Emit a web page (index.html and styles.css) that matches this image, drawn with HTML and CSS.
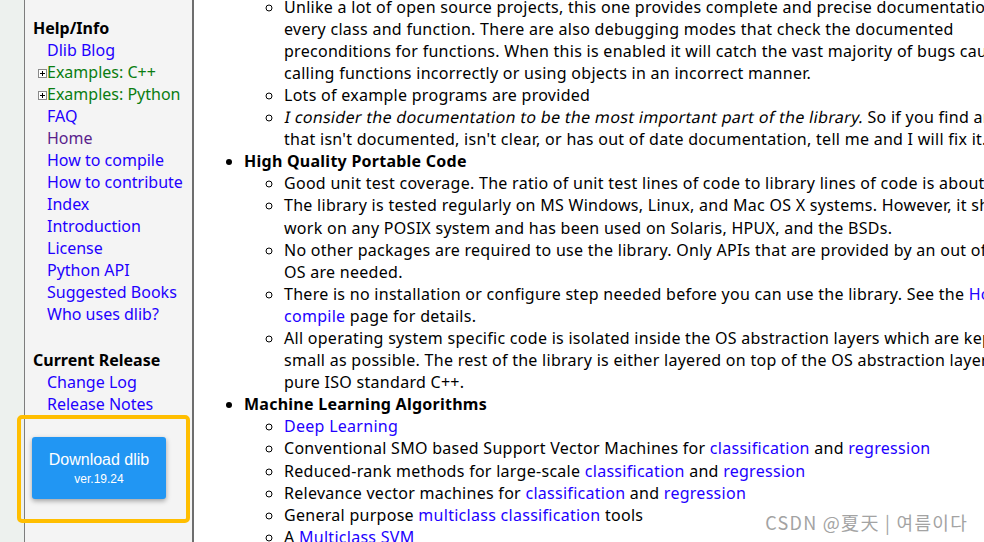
FILE: index.html
```html
<!DOCTYPE html>
<html lang="en">
<head>
<meta charset="utf-8">
<title>dlib C++ Library</title>
<link rel="stylesheet" href="styles.css">
</head>
<body>
<div class="page">
  <div class="gutter"></div>
  <nav class="sidebar">
    <section class="menu">
      <h3 class="menu-title">Help/Info</h3>
      <ul class="links">
        <li><a href="#">Dlib Blog</a></li>
        <li><span class="plus"><svg width="9" height="9" viewBox="0 0 9 9"><rect x="0.5" y="0.5" width="8" height="8" fill="#fff" stroke="#8a8a8a"/><path d="M2 4.5H7M4.5 2V7" stroke="#000" stroke-width="1"/></svg></span><a href="#" class="tree">Examples: C++</a></li>
        <li><span class="plus"><svg width="9" height="9" viewBox="0 0 9 9"><rect x="0.5" y="0.5" width="8" height="8" fill="#fff" stroke="#8a8a8a"/><path d="M2 4.5H7M4.5 2V7" stroke="#000" stroke-width="1"/></svg></span><a href="#" class="tree">Examples: Python</a></li>
        <li><a href="#">FAQ</a></li>
        <li><a href="#" class="visited">Home</a></li>
        <li><a href="#">How to compile</a></li>
        <li><a href="#">How to contribute</a></li>
        <li><a href="#">Index</a></li>
        <li><a href="#">Introduction</a></li>
        <li><a href="#">License</a></li>
        <li><a href="#">Python API</a></li>
        <li><a href="#">Suggested Books</a></li>
        <li><a href="#">Who uses dlib?</a></li>
      </ul>
    </section>
    <section class="menu release">
      <h3 class="menu-title">Current Release</h3>
      <ul class="links">
        <li><a href="#">Change Log</a></li>
        <li><a href="#">Release Notes</a></li>
      </ul>
    </section>
    <div class="download-wrap">
      <a href="#" class="download">Download dlib<span class="ver">ver.19.24</span></a>
      <div class="highlight"></div>
    </div>
  </nav>
  <main class="content">
    <ul class="features">
      <li><b>Documentation</b>
        <ul>
          <li>Unlike a lot of open source projects, this one provides complete and precise documentation for<br>every class and function. There are also debugging modes that check the documented<br>preconditions for functions. When this is enabled it will catch the vast majority of bugs caused by<br>calling functions incorrectly or using objects in an incorrect manner.</li>
          <li>Lots of example programs are provided</li>
          <li><i class="slant">I consider the documentation to be the most important part of the library.</i> So if you find anything<br>that isn't documented, isn't clear, or has out of date documentation, tell me and I will fix it.</li>
        </ul>
      </li>
      <li><b>High Quality Portable Code</b>
        <ul>
          <li>Good unit test coverage. The ratio of unit test lines of code to library lines of code is about 1 to 4.</li>
          <li>The library is tested regularly on MS Windows, Linux, and Mac OS X systems. However, it should<br>work on any POSIX system and has been used on Solaris, HPUX, and the BSDs.</li>
          <li>No other packages are required to use the library. Only APIs that are provided by an out of the box<br>OS are needed.</li>
          <li>There is no installation or configure step needed before you can use the library. See the <a href="#">How to<br>compile</a> page for details.</li>
          <li>All operating system specific code is isolated inside the OS abstraction layers which are kept as<br>small as possible. The rest of the library is either layered on top of the OS abstraction layers or is<br>pure ISO standard C++.</li>
        </ul>
      </li>
      <li><b>Machine Learning Algorithms</b>
        <ul>
          <li><a href="#">Deep Learning</a></li>
          <li>Conventional SMO based Support Vector Machines for <a href="#">classification</a> and <a href="#">regression</a></li>
          <li>Reduced-rank methods for large-scale <a href="#">classification</a> and <a href="#">regression</a></li>
          <li>Relevance vector machines for <a href="#">classification</a> and <a href="#">regression</a></li>
          <li>General purpose <a href="#">multiclass classification</a> tools</li>
          <li>A <a href="#">Multiclass SVM</a></li>
        </ul>
      </li>
    </ul>
  </main>
</div>
<div class="watermark">CSDN @夏天 | 여름이다</div>
</body>
</html>
```

FILE: styles.css
```css
html, body {
  margin: 0;
  padding: 0;
  height: 100%;
  overflow: hidden;
  background: #ffffff;
}

body {
  font-family: "Noto Sans", "Open Sans", "Noto Sans CJK KR", sans-serif;
  font-size: 16px;
  line-height: 22px;
  color: #000;
  position: relative;
}

.page {
  display: flex;
  height: 100%;
}

.gutter {
  width: 24px;
  flex: none;
  background: #edf1ee;
}

.sidebar {
  width: 159px;
  flex: none;
  background: #f4f4f4;
  border-left: 1px solid #7d7d7d;
  border-right: 2px solid #6e6e6e;
  padding: 17px 0 0 8px;
}

.menu-title {
  margin: 0;
  font-size: 16px;
  line-height: 22px;
  font-weight: bold;
  color: #000;
}

.release {
  margin-top: 24px;
}

.links {
  list-style: none;
  margin: 0;
  padding: 0 0 0 14px;
}

.links li {
  white-space: nowrap;
  line-height: 22px;
}

a {
  color: #2200ff;
  text-decoration: none;
}

a.visited {
  color: #5a1f8c;
}

a.tree {
  color: #0a7d10;
}

.plus {
  display: inline-block;
  width: 9px;
  height: 9px;
  margin-left: -9px;
  vertical-align: 0px;
}

.plus svg {
  display: block;
}

.download-wrap {
  position: relative;
  padding-top: 22px;
}

.download {
  display: flex;
  flex-direction: column;
  align-items: center;
  width: 134px;
  height: 62px;
  box-sizing: border-box;
  margin-left: -1px;
  padding-top: 13px;
  background: #2196f3;
  color: #fff;
  border-radius: 3px;
  box-shadow: 0 2px 5px rgba(0, 0, 0, 0.35);
  font-family: "Liberation Sans", Arial, sans-serif;
  font-size: 16px;
  line-height: 20px;
}

.ver {
  font-size: 12px;
  line-height: 18px;
}

.highlight {
  position: absolute;
  left: -16px;
  top: 0;
  width: 173px;
  height: 108px;
  box-sizing: border-box;
  border: 4px solid #ffbe00;
  border-radius: 5px;
  pointer-events: none;
}

.content {
  flex: 1;
  min-width: 0;
  overflow: hidden;
  padding-left: 10px;
}

.features {
  margin: -26.5px 0 0 0;
  padding-left: 40px;
  list-style: disc;
  white-space: nowrap;
  letter-spacing: 0.28px;
  line-height: 22.09px;
}

.features ul {
  margin: 0;
  padding-left: 40px;
  list-style: circle;
}

.features b {
  font-weight: bold;
  letter-spacing: 0.25px;
}

.slant {
  display: inline-block;
  font-style: normal;
  letter-spacing: 0.32px;
  transform: skewX(-11deg);
  transform-origin: 0 70%;
}

.watermark {
  position: absolute;
  right: 16px;
  top: 510px;
  font-family: "Noto Sans CJK SC", "Noto Sans CJK KR", sans-serif;
  font-size: 18px;
  line-height: 24px;
  letter-spacing: 1.3px;
  color: #a3a3a3;
  white-space: nowrap;
}
```
